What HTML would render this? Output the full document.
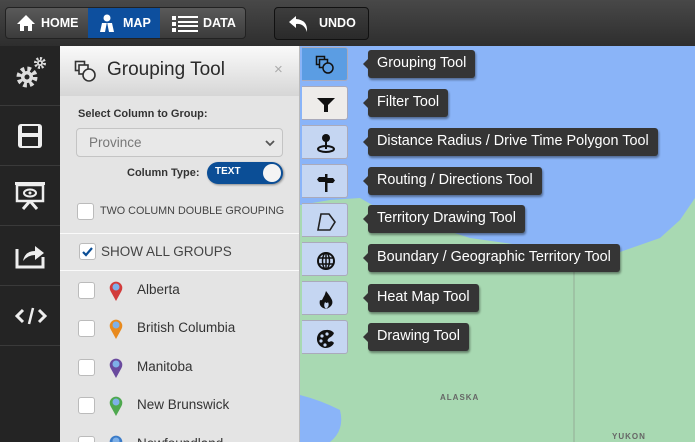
<!DOCTYPE html>
<html style="width:695px;height:442px;overflow:hidden;background:#a8d9b2"><head><meta charset="utf-8"><style>
*{margin:0;padding:0;box-sizing:border-box}
body{width:695px;height:442px;overflow:hidden;position:relative;font-family:"Liberation Sans",sans-serif;background:#8ab4f8}
.top{position:absolute;left:0;top:0;width:695px;height:46px;background:linear-gradient(#484848,#2e2e2e)}
.grp{position:absolute;left:5px;top:7px;width:241px;height:32px;border-radius:4px;background:linear-gradient(#5a5a5a,#3c3c3c);border:1px solid #222;overflow:hidden}
.btn{position:absolute;top:0;height:30px;color:#fff;font-weight:bold;font-size:12.5px;line-height:30px}
.map-b{background:#0d4f9e}
.undo{position:absolute;left:274px;top:7px;width:95px;height:33px;border-radius:4px;background:linear-gradient(#3d3d3d,#2a2a2a);border:1px solid #111;color:#fff;font-weight:bold;font-size:12.5px;line-height:31px}
.side{position:absolute;left:0;top:46px;width:60px;height:396px;background:#242424}
.side div{height:60px;border-bottom:1px solid #3a3a3a;position:relative}
.panel{position:absolute;left:60px;top:46px;width:240px;height:396px;background:#e4e4e4;border-right:1px solid #bbb;overflow:hidden}
.ph{height:50px;background:linear-gradient(#fafafa,#d6d6d6);position:relative}
.ph span{position:absolute;left:47px;top:13px;font-size:19px;color:#2a2a2a}
.lbl{position:absolute;font-weight:bold;font-size:11px;color:#333}
.sel{position:absolute;left:16px;top:82px;width:207px;height:29px;border:1px solid #c4c4c4;border-radius:4px;background:#e8e8e8;color:#777;font-size:13.5px;line-height:27px;padding-left:12px}
.cb{position:absolute;width:17px;height:17px;border:1px solid #bbb;border-radius:3px;background:#fff}
.row{position:absolute;left:0;width:240px;height:38px}
.row .cb{left:18px;top:10px}
.row span{position:absolute;left:77px;top:10px;font-size:13.5px;color:#333}
.tb{position:absolute;left:302px;width:46px;height:34px;background:#c5d6f2;border:1px solid #aab;border-left:none;border-radius:0 3px 3px 0}
.tt{position:absolute;left:368px;height:28px;background:#353535;color:#fff;font-size:14.4px;line-height:27px;padding:0 9px;border-radius:3px;box-shadow:1px 2px 2px rgba(0,0,0,.4);white-space:nowrap}
.tt:before{content:"";position:absolute;left:-5px;top:9px;border:5px solid transparent;border-left:none;border-right-color:#353535}
.ic{position:absolute;left:13px;top:7px}
</style></head><body>
<svg style="position:absolute;left:0;top:0" width="695" height="442">
<path d="M300 205 L330 200 L360 198 L390 215 L430 225 L470 238 L520 245 L570 248 L620 252 L640 245 L660 238 L680 220 L695 198 L695 442 L300 442Z" fill="#a8d9b2"/>
<path d="M300 395 Q320 400 340 410 Q345 430 330 442 L300 442Z" fill="#8ab4f8"/>
<line x1="574" y1="250" x2="574" y2="442" stroke="#8a9a8a" stroke-width="0.7"/>
<text x="440" y="400" font-family="Liberation Sans" font-size="8" font-weight="bold" fill="#666" letter-spacing="1">ALASKA</text>
<text x="612" y="439" font-family="Liberation Sans" font-size="8" font-weight="bold" fill="#666" letter-spacing="1">YUKON</text>
</svg>
<div class="top">
<div class="grp">
<div class="btn" style="left:0;width:82px"><svg style="position:absolute;left:10px;top:6px" width="20" height="18"><path d="M10 1 L1 10 L4 10 L4 17 L8 17 L8 12 L12 12 L12 17 L16 17 L16 10 L19 10Z" fill="#fff"/></svg><span style="position:absolute;left:35px">HOME</span></div>
<div class="btn map-b" style="left:82px;width:72px"><svg style="position:absolute;left:11px;top:6px" width="16" height="19"><circle cx="8" cy="4" r="3.5" fill="#fff"/><path d="M3 9 L13 9 L15 18 L1 18Z" fill="#fff"/><path d="M8 8 L6 18 L10 18Z" fill="#0d4f9e"/></svg><span style="position:absolute;left:35px">MAP</span></div>
<div class="btn" style="left:154px;width:87px"><svg style="position:absolute;left:12px;top:8px" width="26" height="16"><rect x="0" y="0" width="4" height="4" fill="#fff"/><rect x="0" y="6" width="4" height="4" fill="#fff"/><rect x="0" y="12" width="4" height="4" fill="#fff"/><rect x="6" y="0" width="20" height="2" fill="#fff"/><rect x="6" y="5" width="20" height="2" fill="#fff"/><rect x="6" y="9" width="20" height="2" fill="#fff"/><rect x="6" y="14" width="20" height="2" fill="#fff"/></svg><span style="position:absolute;left:43px">DATA</span></div>
</div>
<div class="undo"><svg style="position:absolute;left:13px;top:6px" width="22" height="20"><path d="M8 2 L1 8 L8 14 L8 10 Q16 9 19 18 Q20 6 8 5Z" fill="#fff"/></svg><span style="position:absolute;left:44px">UNDO</span></div>
</div>
<div class="side">
<div><svg style="position:absolute;left:14px;top:10px" width="34" height="34"><circle cx="13" cy="21" r="8" fill="none" stroke="#ddd" stroke-width="5" stroke-dasharray="3.5 2.8"/><circle cx="13" cy="21" r="6" fill="#ddd"/><circle cx="13" cy="21" r="2.5" fill="#242424"/><circle cx="26" cy="7" r="4.5" fill="none" stroke="#ddd" stroke-width="3" stroke-dasharray="2 1.5"/><circle cx="26" cy="7" r="3" fill="#ddd"/><circle cx="26" cy="7" r="1.2" fill="#242424"/></svg></div>
<div><svg style="position:absolute;left:17px;top:17px" width="26" height="26"><rect x="1" y="1" width="24" height="24" rx="3" fill="#eee"/><rect x="5" y="3" width="16" height="7" fill="#242424"/><rect x="5" y="14" width="16" height="9" fill="#242424"/></svg></div>
<div><svg style="position:absolute;left:14px;top:13px" width="32" height="34"><rect x="1" y="3" width="30" height="3" fill="#eee"/><rect x="3" y="6" width="26" height="16" fill="none" stroke="#eee" stroke-width="2.5"/><ellipse cx="16" cy="14" rx="6" ry="3.5" fill="none" stroke="#eee" stroke-width="2"/><circle cx="16" cy="14" r="1.5" fill="#eee"/><path d="M16 22 L9 30 M16 22 L23 30" stroke="#eee" stroke-width="3"/></svg></div>
<div><svg style="position:absolute;left:15px;top:15px" width="32" height="28"><path d="M2 8 L2 26 L28 26 L28 16" fill="none" stroke="#eee" stroke-width="3"/><path d="M8 20 Q10 10 20 10 L20 5 L29 12 L20 19 L20 14 Q13 14 8 20Z" fill="#eee"/></svg></div>
<div><svg style="position:absolute;left:15px;top:20px" width="32" height="20"><path d="M8 4 L2 10 L8 16 M24 4 L30 10 L24 16" fill="none" stroke="#eee" stroke-width="3"/><path d="M18 2 L14 18" stroke="#eee" stroke-width="2.5"/></svg></div>
</div>
<div class="panel">
<div class="ph"><svg style="position:absolute;left:14px;top:14px" width="24" height="24"><rect x="1.5" y="1.5" width="9" height="9" fill="none" stroke="#333" stroke-width="1.6"/><rect x="5" y="5" width="9" height="9" fill="#f0f0f0" stroke="#333" stroke-width="1.6"/><circle cx="15" cy="15" r="6" fill="#eee" stroke="#333" stroke-width="1.6"/></svg><span>Grouping Tool</span><span style="left:214px;top:15px;font-size:15px;color:#aaa">×</span></div>
<div class="lbl" style="left:18px;top:62px">Select Column to Group:</div>
<div class="sel">Province<svg style="position:absolute;right:7px;top:11px" width="10" height="7"><path d="M1 1 L5 5 L9 1" fill="none" stroke="#555" stroke-width="1.8"/></svg></div>
<div class="lbl" style="left:67px;top:121px">Column Type:</div>
<div style="position:absolute;left:147px;top:116px;width:76px;height:22px;border-radius:11px;background:#0b4e96;box-shadow:1px 1px 2px rgba(0,0,0,.4)"><span style="position:absolute;left:8px;top:4px;color:#fff;font-size:10px;font-weight:bold">TEXT</span><div style="position:absolute;right:2px;top:2px;width:18px;height:18px;border-radius:9px;background:#f4f4f4"></div></div>
<div class="cb" style="left:17px;top:157px"></div>
<div style="position:absolute;left:40px;top:159px;font-size:10.8px;color:#444;white-space:nowrap">TWO COLUMN DOUBLE GROUPING</div>
<div style="position:absolute;left:0;top:187px;width:240px;height:38px;border-top:1px solid #fafafa;border-bottom:1px solid #fafafa"></div>
<div class="cb" style="left:19px;top:197px"><svg width="15" height="15"><path d="M3 8 L6 11 L12 4" fill="none" stroke="#0b4e96" stroke-width="2.2"/></svg></div>
<div style="position:absolute;left:41px;top:198px;font-size:13.5px;color:#444">SHOW ALL GROUPS</div>
<div class="row" style="top:226px"><div class="cb"></div><svg style="position:absolute;left:49px;top:8px" width="14" height="22"><path d="M7 21 L1.5 11 A6.3 6.3 0 1 1 12.5 11Z" fill="#d23b3b"/><circle cx="7" cy="7" r="3.5" fill="#7eb0e8"/></svg><span>Alberta</span></div>
<div class="row" style="top:264px"><div class="cb"></div><svg style="position:absolute;left:49px;top:8px" width="14" height="22"><path d="M7 21 L1.5 11 A6.3 6.3 0 1 1 12.5 11Z" fill="#e88a1e"/><circle cx="7" cy="7" r="3.5" fill="#7eb0e8"/></svg><span>British Columbia</span></div>
<div class="row" style="top:303px"><div class="cb"></div><svg style="position:absolute;left:49px;top:8px" width="14" height="22"><path d="M7 21 L1.5 11 A6.3 6.3 0 1 1 12.5 11Z" fill="#6a4a9e"/><circle cx="7" cy="7" r="3.5" fill="#7eb0e8"/></svg><span>Manitoba</span></div>
<div class="row" style="top:341px"><div class="cb"></div><svg style="position:absolute;left:49px;top:8px" width="14" height="22"><path d="M7 21 L1.5 11 A6.3 6.3 0 1 1 12.5 11Z" fill="#4ea84e"/><circle cx="7" cy="7" r="3.5" fill="#7eb0e8"/></svg><span>New Brunswick</span></div>
<div class="row" style="top:380px"><div class="cb"></div><svg style="position:absolute;left:49px;top:8px" width="14" height="22"><path d="M7 21 L1.5 11 A6.3 6.3 0 1 1 12.5 11Z" fill="#3a7bc8"/><circle cx="7" cy="7" r="3.5" fill="#7eb0e8"/></svg><span>Newfoundland</span></div>
</div>

<div class="tb" style="top:47px;background:#5b9de3"><svg class="ic" width="22" height="22"><rect x="1.5" y="1.5" width="8" height="8" fill="none" stroke="#111" stroke-width="1.5"/><rect x="4.5" y="4.5" width="8" height="8" fill="#5b9de3" stroke="#111" stroke-width="1.5"/><circle cx="13" cy="13" r="5" fill="#5b9de3" stroke="#111" stroke-width="1.5"/></svg></div>
<div class="tb" style="top:86px;background:#eeecea"><svg class="ic" width="22" height="22"><path d="M2 4 L20 4 L13 11 L13 18 L9 18 L9 11Z" fill="#111"/></svg></div>
<div class="tb" style="top:125px"><svg class="ic" width="22" height="22"><circle cx="11" cy="5" r="4" fill="#111"/><rect x="10" y="8" width="2" height="8" fill="#111"/><ellipse cx="11" cy="16" rx="8" ry="3" fill="none" stroke="#111" stroke-width="2"/></svg></div>
<div class="tb" style="top:164px"><svg class="ic" width="22" height="22"><rect x="10" y="2" width="2.5" height="18" fill="#111"/><path d="M4 5 L10 5 L10 10 L4 10 L2 7.5Z" fill="#111"/><path d="M12 6 L18 6 L20 8.5 L18 11 L12 11Z" fill="#111"/></svg></div>
<div class="tb" style="top:203px"><svg class="ic" width="22" height="22"><path d="M6 3 L14 3 L20 11 L15 19 L3 19Z" fill="none" stroke="#222" stroke-width="1.6"/></svg></div>
<div class="tb" style="top:242px"><svg class="ic" width="22" height="22"><circle cx="11" cy="11" r="8" fill="none" stroke="#111" stroke-width="2"/><ellipse cx="11" cy="11" rx="3.5" ry="8" fill="none" stroke="#111" stroke-width="1.5"/><path d="M3 8 L19 8 M3 14 L19 14 M11 3 L11 19" stroke="#111" stroke-width="1.5"/></svg></div>
<div class="tb" style="top:281px"><svg class="ic" width="22" height="22"><path d="M11 2 Q15 7 17 11 Q19 17 11 20 Q3 18 5 11 Q7 12 8 9 Q10 6 11 2Z" fill="#111"/><path d="M11 20 Q8 17 10 13 Q12 15 13 13 Q15 17 11 20Z" fill="#c5d6f2"/></svg></div>
<div class="tb" style="top:320px"><svg class="ic" width="22" height="22"><path d="M11 2 A9 9 0 1 0 19 15 Q17 12 14 14 Q11 13 14 10 Q18 8 19 5 A9 9 0 0 0 11 2Z" fill="#111"/><circle cx="7" cy="8" r="1.6" fill="#c5d6f2"/><circle cx="12" cy="6" r="1.6" fill="#c5d6f2"/><circle cx="6" cy="13" r="1.6" fill="#c5d6f2"/><circle cx="10" cy="17" r="1.6" fill="#c5d6f2"/></svg></div>

<div class="tt" style="top:50px">Grouping Tool</div>
<div class="tt" style="top:89px">Filter Tool</div>
<div class="tt" style="top:128px">Distance Radius / Drive Time Polygon Tool</div>
<div class="tt" style="top:167px">Routing / Directions Tool</div>
<div class="tt" style="top:205px">Territory Drawing Tool</div>
<div class="tt" style="top:244px">Boundary / Geographic Territory Tool</div>
<div class="tt" style="top:284px">Heat Map Tool</div>
<div class="tt" style="top:323px">Drawing Tool</div>
</body></html>
